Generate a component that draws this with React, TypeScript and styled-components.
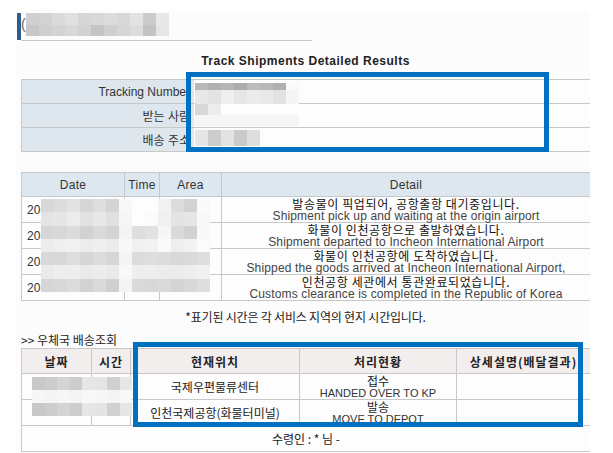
import React from "react";
import styled, { createGlobalStyle } from "styled-components";

const Global = createGlobalStyle`
  html, body { margin: 0; padding: 0; background: #ffffff; }
  body { font-family: "Liberation Sans", "Noto Sans CJK KR", sans-serif; color: #333; }
`;

const KR = `"Liberation Sans", "Noto Sans CJK KR", sans-serif`;

const Container = styled.div`
  position: relative;
  margin: 10px 0 0 15px;
  width: 575px;
  background: #fcfcfc;
  padding: 3px 0 6px 2px;
  box-sizing: border-box;
`;

const Header = styled.div`
  display: flex;
  width: 295px;
`;

const HeaderBar = styled.div`
  width: 4px;
  height: 27px;
  background: #2f5d8c;
`;

const HeaderBody = styled.div`
  flex: 1;
  height: 27px;
  border-bottom: 1px solid #c8c8c8;
  display: flex;
  align-items: flex-start;
`;

const Paren = styled.span`
  font-family: ${KR};
  font-size: 14px;
  line-height: 23px;
  color: #666;
  width: 5px;
  overflow: hidden;
`;

const Mosaic = styled.div<{ $cols: number; $cw: number; $rh: number }>`
  display: grid;
  grid-template-columns: repeat(${(p) => p.$cols}, ${(p) => p.$cw}px);
  grid-auto-rows: ${(p) => p.$rh}px;
`;

const Tile = styled.div<{ $c: string }>`
  background: ${(p) => p.$c};
`;

const Blur = ({ rows, cw, rh }: { rows: string[][]; cw: number; rh: number }) => (
  <Mosaic $cols={rows[0].length} $cw={cw} $rh={rh}>
    {rows.flatMap((r, i) => r.map((c, j) => <Tile key={`${i}-${j}`} $c={c} />))}
  </Mosaic>
);

const Title = styled.div`
  margin: 12px 0 0 4px;
  width: 569px;
  text-align: center;
  font-family: ${KR};
  font-weight: bold;
  font-size: 12px;
  letter-spacing: 0.5px;
  line-height: 16px;
  color: #222;
`;

const Table = styled.table<{ $mt: number }>`
  margin: ${(p) => p.$mt}px 0 0 4px;
  width: 569px;
  border-collapse: collapse;
  table-layout: fixed;
  font-family: ${KR};
`;

const InfoRow = styled.tr`
  height: 24px;
`;

const InfoLabel = styled.td`
  width: 168px;
  background: #dfe7ee;
  border: 1px solid #c8c8c8;
  border-right: none;
  text-align: right;
  padding: 0 4px 0 0;
  font-size: 12px;
  color: #333;
  white-space: nowrap;
  overflow: hidden;
`;

const InfoValue = styled.td`
  border-top: 1px solid #c8c8c8;
  border-bottom: 1px solid #c8c8c8;
  background: #fdfdfd;
  padding: 3px 0 0 4px;
  vertical-align: top;
`;

const HeadCell = styled.th<{ $w?: number }>`
  ${(p) => (p.$w ? `width: ${p.$w}px;` : "")}
  background: #dde7ef;
  border: 1px solid #c8c8c8;
  border-right: none;
  font-weight: normal;
  font-size: 12px;
  letter-spacing: 0.3px;
  color: #333;
  height: 23px;
  padding: 0;
`;

const Cell = styled.td<{ $align?: string }>`
  border: 1px solid #c8c8c8;
  border-right: none;
  background: #fdfdfd;
  padding: 0 0 0 5px;
  font-size: 12px;
  color: #333;
  text-align: ${(p) => p.$align || "left"};
  height: 25px;
`;

const DetailCell = styled.td`
  border: 1px solid #c8c8c8;
  border-right: none;
  background: #fdfdfd;
  text-align: center;
  padding: 0;
  height: 25px;
`;

const KoLine = styled.div`
  font-family: "Noto Sans CJK KR", sans-serif;
  font-size: 12px;
  line-height: 13px;
  letter-spacing: 0.6px;
  color: #111;
`;

const EnLine = styled.div`
  font-family: "Liberation Sans", sans-serif;
  font-size: 12px;
  line-height: 12px;
  letter-spacing: 0.15px;
  color: #444;
`;

const Overlay = styled.div`
  position: absolute;
  pointer-events: none;
`;

const Note = styled.div`
  margin: 8px 0 0 4px;
  width: 569px;
  text-align: center;
  font-family: "Noto Sans CJK KR", sans-serif;
  font-size: 12px;
  letter-spacing: -0.2px;
  line-height: 16px;
  color: #222;
`;

const SubTitle = styled.div`
  margin: 8px 0 0 4px;
  font-family: "Noto Sans CJK KR", sans-serif;
  font-size: 12px;
  line-height: 14px;
  color: #222;
`;

const PostHead = styled.th<{ $w?: number }>`
  ${(p) => (p.$w ? `width: ${p.$w}px;` : "")}
  background: #f3eeee;
  border: 1px solid #c8c8c8;
  border-right: none;
  font-family: "Noto Sans CJK KR", sans-serif;
  font-weight: bold;
  font-size: 12px;
  letter-spacing: 1px;
  color: #222;
  height: 24px;
  padding: 0;
`;

const PostCell = styled.td`
  border: 1px solid #c8c8c8;
  border-right: none;
  background: #fdfdfd;
  text-align: center;
  padding: 0;
  height: 25px;
  font-family: "Noto Sans CJK KR", sans-serif;
  font-size: 12px;
  color: #222;
  line-height: 13px;
`;

const StatusEn = styled.div`
  font-family: "Liberation Sans", sans-serif;
  font-size: 11px;
  line-height: 12px;
  color: #333;
`;

const Highlight = styled(Overlay)<{ $l: number; $t: number; $w: number; $h: number }>`
  left: ${(p) => p.$l}px;
  top: ${(p) => p.$t}px;
  width: ${(p) => p.$w}px;
  height: ${(p) => p.$h}px;
  border: 5px solid #0070c0;
  box-sizing: border-box;
`;

const BlurSpot = styled(Overlay)<{ $l: number; $t: number }>`
  left: ${(p) => p.$l}px;
  top: ${(p) => p.$t}px;
`;

const titleBlur = [
  ["#cfcfcf", "#d2d2d2", "#dadada", "#e0e0e0", "#d6d6d6", "#d8d8d8", "#dcdcdc", "#d8d8d8", "#e2e2e2", "#cbcbcb", "#e8e8e8"],
  ["#c8c8c8", "#cfcfcf", "#d3d3d3", "#d8d8d8", "#d2d2d2", "#c4c4c4", "#d0d0d0", "#d6d6d6", "#dcdcdc", "#c3c3c3", "#e6e6e6"],
];

const trackBlur = [
  ["#b8b8b8", "#b0b0b0", "#b5b5b5", "#acacac", "#bcbcbc", "#b8b8b8", "#b0b0b0", "#fafafa"],
  ["#e8e8e8", "#e3e3e3", "#efefef", "#e6e6e6", "#ebebeb", "#e9e9e9", "#e2e2e2", "#f5f5f5"],
  ["#e8e8e8", "#e3e3e3", "#efefef", "#e6e6e6", "#ebebeb", "#e9e9e9", "#e2e2e2", "#f5f5f5"],
];
const nameBlur = [
  ["#d8d8d8", "#ececec", "#fdfdfd", "#fdfdfd", "#fdfdfd", "#fdfdfd", "#fdfdfd", "#fdfdfd"],
  ["#f5f5f5", "#f5f5f5", "#f5f5f5", "#f5f5f5", "#f5f5f5", "#f5f5f5", "#f5f5f5", "#f5f5f5"],
];
const addrBlur = [["#e6e6e6", "#cdcdcd", "#e3e3e3", "#cacaca", "#dedede"]];

const eventBlur = [
  ["#d8d8d8", "#dcdcdc", "#e2e2e2", "#d6d6d6", "#dedede", "#d4d4d4", "#f8f8f8", "#fdfdfd", "#fdfdfd", "#f2f2f2", "#dcdcdc", "#d2d2d2", "#fafafa"],
  ["#e4e4e4", "#e6e6e6", "#ececec", "#e2e2e2", "#e8e8e8", "#e0e0e0", "#f6f6f6", "#fdfdfd", "#fbfbfb", "#f0f0f0", "#e4e4e4", "#e6e6e6", "#f8f8f8"],
  ["#d6d6d6", "#d8d8d8", "#dcdcdc", "#d2d2d2", "#dadada", "#d4d4d4", "#f4f4f4", "#dedede", "#e2e2e2", "#f6f6f6", "#dadada", "#d2d2d2", "#f8f8f8"],
  ["#ececec", "#efefef", "#f0f0f0", "#ececec", "#efefef", "#ececec", "#f8f8f8", "#f0f0f0", "#f2f2f2", "#fafafa", "#eeeeee", "#f2f2f2", "#fbfbfb"],
  ["#d8d8d8", "#d8d8d8", "#dedede", "#d6d6d6", "#dcdcdc", "#d6d6d6", "#f4f4f4", "#dcdcdc", "#dedede", "#dcdcdc", "#d8d8d8", "#dadada", "#dedede"],
  ["#eaeaea", "#eeeeee", "#eeeeee", "#eaeaea", "#ececec", "#eaeaea", "#f8f8f8", "#eeeeee", "#eeeeee", "#ececec", "#ececec", "#eeeeee", "#f0f0f0"],
  ["#d6d6d6", "#d8d8d8", "#dcdcdc", "#d2d2d2", "#dadada", "#cfcfcf", "#f4f4f4", "#dadada", "#d8d8d8", "#dadada", "#d4d4d4", "#d8d8d8", "#dedede"],
];

const postBlur = [
  ["#c8c8c8", "#cccccc", "#d4d4d4", "#cccccc", "#e6e6e6", "#e4e4e4", "#d0d0d0", "#e6e6e6"],
  ["#f6f6f6", "#f4f4f4", "#f6f6f6", "#f4f4f4", "#f8f8f8", "#f6f6f6", "#f4f4f4", "#f8f8f8"],
  ["#c8c8c8", "#cccccc", "#d4d4d4", "#cccccc", "#e6e6e6", "#e4e4e4", "#d0d0d0", "#e6e6e6"],
];

const events = [
  ["발송물이 픽업되어, 공항출항 대기중입니다.", "Shipment pick up and waiting at the origin airport"],
  ["화물이 인천공항으로 출발하였습니다.", "Shipment departed to Incheon International Airport"],
  ["화물이 인천공항에 도착하였습니다.", "Shipped the goods arrived at Incheon International Airport,"],
  ["인천공항 세관에서 통관완료되었습니다.", "Customs clearance is completed in the Republic of Korea"],
];

const posts = [
  ["국제우편물류센터", "접수", "HANDED OVER TO KP"],
  ["인천국제공항(화물터미널)", "발송", "MOVE TO DEPOT"],
];

export default function App() {
  return (
    <>
      <Global />
      <Container>
        <Header>
          <HeaderBar />
          <HeaderBody>
            <Paren>(</Paren>
            <Blur rows={titleBlur} cw={13} rh={11.5} />
          </HeaderBody>
        </Header>

        <Title>Track Shipments Detailed Results</Title>

        <Table $mt={10}>
          <tbody>
            <InfoRow>
              <InfoLabel>Tracking Number</InfoLabel>
              <InfoValue />
            </InfoRow>
            <InfoRow>
              <InfoLabel>받는 사람</InfoLabel>
              <InfoValue />
            </InfoRow>
            <InfoRow>
              <InfoLabel>배송 주소</InfoLabel>
              <InfoValue />
            </InfoRow>
          </tbody>
        </Table>

        <Table $mt={20}>
          <thead>
            <tr>
              <HeadCell $w={102}>Date</HeadCell>
              <HeadCell $w={34}>Time</HeadCell>
              <HeadCell $w={61}>Area</HeadCell>
              <HeadCell>Detail</HeadCell>
            </tr>
          </thead>
          <tbody>
            {events.map(([ko, en], i) => (
              <tr key={i}>
                <Cell>20</Cell>
                <Cell />
                <Cell />
                <DetailCell>
                  <KoLine>{ko}</KoLine>
                  <EnLine>{en}</EnLine>
                </DetailCell>
              </tr>
            ))}
          </tbody>
        </Table>

        <Note>*표기된 시간은 각 서비스 지역의 현지 시간입니다.</Note>
        <SubTitle>&gt;&gt; 우체국 배송조회</SubTitle>

        <Table $mt={1}>
          <thead>
            <tr>
              <PostHead $w={69}>날짜</PostHead>
              <PostHead $w={38}>시간</PostHead>
              <PostHead $w={168}>현재위치</PostHead>
              <PostHead $w={156}>처리현황</PostHead>
              <PostHead>상세설명(배달결과)</PostHead>
            </tr>
          </thead>
          <tbody>
            {posts.map(([loc, ko, en], i) => (
              <tr key={i}>
                <PostCell />
                <PostCell />
                <PostCell>{loc}</PostCell>
                <PostCell>
                  {ko}
                  <StatusEn>{en}</StatusEn>
                </PostCell>
                <PostCell />
              </tr>
            ))}
            <tr>
              <PostCell colSpan={5}>수령인 : * 님 -</PostCell>
            </tr>
          </tbody>
        </Table>

        <BlurSpot $l={180} $t={73}>
          <Blur rows={trackBlur} cw={13} rh={7} />
        </BlurSpot>
        <BlurSpot $l={180} $t={94}>
          <Blur rows={nameBlur} cw={13} rh={11} />
        </BlurSpot>
        <BlurSpot $l={180} $t={120}>
          <Blur rows={addrBlur} cw={13} rh={16} />
        </BlurSpot>
        <BlurSpot $l={26} $t={189}>
          <Blur rows={eventBlur} cw={13} rh={13.3} />
        </BlurSpot>
        <BlurSpot $l={17} $t={367}>
          <Blur rows={postBlur} cw={12.5} rh={13} />
        </BlurSpot>

        <Highlight $l={171} $t={62} $w={363} $h={80} />
        <Highlight $l={118} $t={332} $w={450} $h={85} />
      </Container>
    </>
  );
}
